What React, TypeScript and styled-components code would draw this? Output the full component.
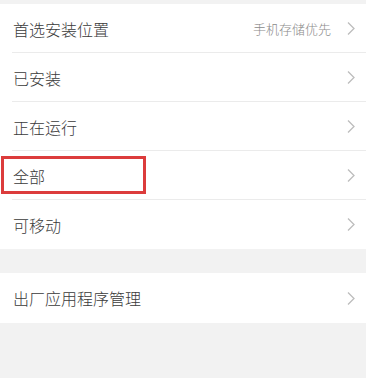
import React from "react";
import styled, { createGlobalStyle } from "styled-components";

const Global = createGlobalStyle`
  html, body { margin: 0; padding: 0; background: #f2f2f2; }
  body { font-family: "Noto Sans CJK SC", "Noto Sans", sans-serif; }
`;

const Page = styled.div`
  width: 366px;
  min-height: 378px;
  background: #f2f2f2;
  padding-top: 4px;
  box-sizing: border-box;
  display: flex;
  flex-direction: column;
  gap: 24px;
`;

const Group = styled.div`
  background: #ffffff;
  display: flex;
  flex-direction: column;
`;

const Row = styled.div<{ $last?: boolean; $tall?: boolean }>`
  position: relative;
  height: ${(p) => (p.$tall ? "50px" : "49px")};
  display: flex;
  align-items: center;
  padding: 0 10px 0 13px;
  box-sizing: border-box;
  &::after {
    content: "";
    display: ${(p) => (p.$last ? "none" : "block")};
    position: absolute;
    left: 12px;
    right: 0;
    bottom: 0;
    height: 1px;
    background: #ebebeb;
  }
`;

const Label = styled.span`
  flex: 1;
  font-size: 16px;
  font-weight: 300;
  color: #3a3a3a;
  line-height: 1;
`;

const Value = styled.span`
  font-size: 13px;
  font-weight: 300;
  color: #8a8a8a;
  margin-right: 15px;
  line-height: 1;
`;

const Chevron = styled.svg`
  width: 10px;
  height: 15px;
  display: block;
`;

const Highlight = styled.div`
  position: absolute;
  left: 1px;
  top: 5px;
  width: 145px;
  height: 38px;
  border: 3px solid #dc3c3c;
  box-sizing: border-box;
  pointer-events: none;
`;

const Arrow = () => (
  <Chevron viewBox="0 0 10 15">
    <polyline points="2,1.5 8,7.5 2,13.5" fill="none" stroke="#bdbdbd" strokeWidth="1.3" />
  </Chevron>
);

type Item = { label: string; value?: string; highlight?: boolean };

const group1: Item[] = [
  { label: "首选安装位置", value: "手机存储优先" },
  { label: "已安装" },
  { label: "正在运行" },
  { label: "全部", highlight: true },
  { label: "可移动" },
];

const group2: Item[] = [{ label: "出厂应用程序管理" }];

const renderGroup = (items: Item[], tall?: boolean) => (
  <Group>
    {items.map((it, i) => (
      <Row key={it.label} $last={i === items.length - 1} $tall={tall}>
        <Label>{it.label}</Label>
        {it.value && <Value>{it.value}</Value>}
        <Arrow />
        {it.highlight && <Highlight />}
      </Row>
    ))}
  </Group>
);

export default function App() {
  return (
    <>
      <Global />
      <Page>
        {renderGroup(group1)}
        {renderGroup(group2, true)}
      </Page>
    </>
  );
}
